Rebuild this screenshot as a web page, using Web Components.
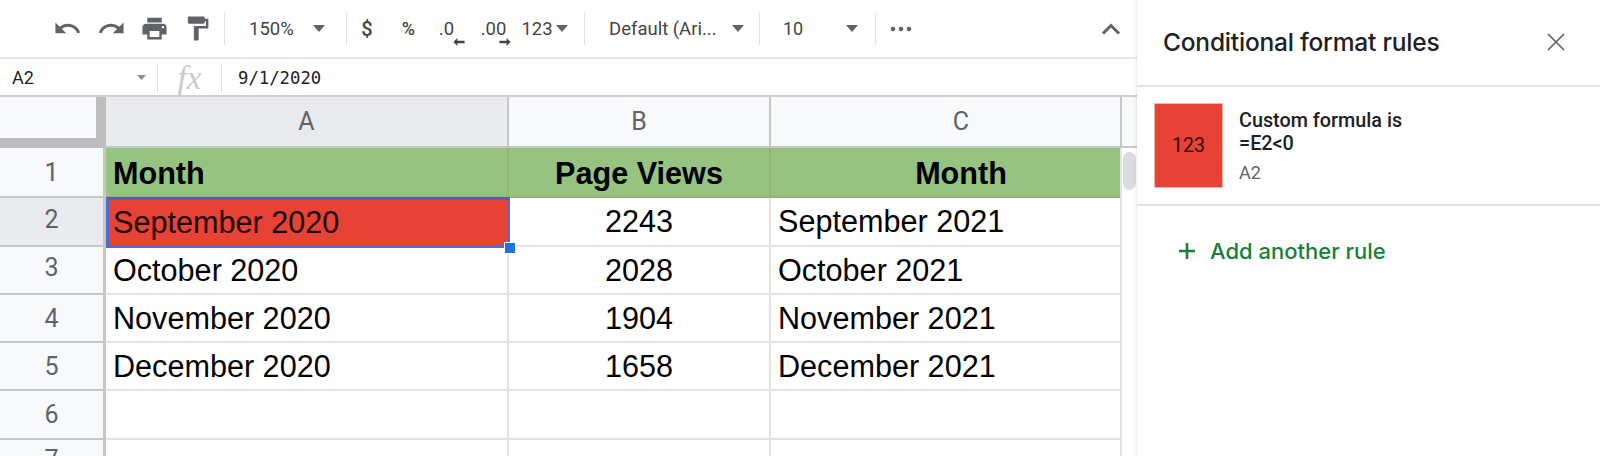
<!DOCTYPE html>
<html>
<head>
<meta charset="utf-8">
<title>Conditional format rules</title>
<style>
html, body { margin: 0; height: 456px; overflow: hidden; background: #fff; }
body { font-family: Roboto, "Liberation Sans", sans-serif; }
#app { display: flex; width: 1600px; height: 456px; overflow: hidden; }
#main { width: 1137px; flex: none; display: flex; flex-direction: column; overflow: hidden; }
</style>
</head>
<body>
<div id="app">
    <div id="main">
        <gs-toolbar></gs-toolbar>
        <gs-formula-bar cell="A2" value="9/1/2020"></gs-formula-bar>
        <gs-sheet>
            <gs-cell kind="corner"></gs-cell>
            <gs-cell kind="col" active>A</gs-cell>
            <gs-cell kind="col">B</gs-cell>
            <gs-cell kind="col">C</gs-cell>

            <gs-cell kind="row">1</gs-cell>
            <gs-cell kind="head" left>Month</gs-cell>
            <gs-cell kind="head">Page Views</gs-cell>
            <gs-cell kind="head">Month</gs-cell>

            <gs-cell kind="row" active style="padding-bottom:5px">2</gs-cell>
            <gs-cell selected left>September 2020</gs-cell>
            <gs-cell>2243</gs-cell>
            <gs-cell left>September 2021</gs-cell>

            <gs-cell kind="row" style="padding-bottom:5px">3</gs-cell>
            <gs-cell left>October 2020</gs-cell>
            <gs-cell>2028</gs-cell>
            <gs-cell left>October 2021</gs-cell>

            <gs-cell kind="row">4</gs-cell>
            <gs-cell left>November 2020</gs-cell>
            <gs-cell>1904</gs-cell>
            <gs-cell left>November 2021</gs-cell>

            <gs-cell kind="row">5</gs-cell>
            <gs-cell left>December 2020</gs-cell>
            <gs-cell>1658</gs-cell>
            <gs-cell left>December 2021</gs-cell>

            <gs-cell kind="row">6</gs-cell>
            <gs-cell></gs-cell>
            <gs-cell></gs-cell>
            <gs-cell></gs-cell>

            <gs-cell kind="row">7</gs-cell>
            <gs-cell></gs-cell>
            <gs-cell></gs-cell>
            <gs-cell></gs-cell>
        </gs-sheet>
    </div>
    <gs-panel title-text="Conditional format rules">
        <gs-rule-card range="A2">
            <span>Custom formula is</span>
            <span>=E2&lt;0</span>
        </gs-rule-card>
    </gs-panel>
</div>

<script>
const ICONS = {
    undo: 'M12.5 8c-2.65 0-5.05.99-6.9 2.6L2 7v9h9l-3.62-3.62c1.39-1.16 3.16-1.88 5.12-1.88 3.54 0 6.55 2.31 7.6 5.5l2.37-.78C21.08 11.03 17.15 8 12.5 8z',
    redo: 'M18.4 10.6C16.55 8.99 14.15 8 11.5 8c-4.65 0-8.58 3.03-9.96 7.22L3.9 16c1.05-3.19 4.05-5.5 7.6-5.5 1.95 0 3.73.72 5.12 1.88L13 16h9V7l-3.6 3.6z',
    print: 'M19 8H5c-1.66 0-3 1.34-3 3v6h4v4h12v-4h4v-6c0-1.66-1.34-3-3-3zm-3 11H8v-5h8v5zm3-7c-.55 0-1-.45-1-1s.45-1 1-1 1 .45 1 1-.45 1-1 1zm-1-9H6v4h12V3z',
    paint: 'M18 4V3c0-.55-.45-1-1-1H5c-.55 0-1 .45-1 1v4c0 .55.45 1 1 1h12c.55 0 1-.45 1-1V6h1v4H9v11c0 .55.45 1 1 1h2c.55 0 1-.45 1-1v-9h8V4h-3z'
};

function icon(name, size) {
    return `<svg width="${size}" height="${size}" viewBox="0 0 24 24" fill="#5f6368"><path d="${ICONS[name]}"/></svg>`;
}

const CARET = '<svg class="caret" width="14" height="7" viewBox="0 0 14 7"><path d="M1 0h12L7 7z" fill="#5f6368"/></svg>';
const ARROW_LEFT = '<svg class="arrow" style="left:28px" width="12" height="8" viewBox="0 0 14 10"><path d="M5 0v3.5h9v3H5V10L0 5z" fill="#444"/></svg>';
const ARROW_RIGHT = '<svg class="arrow" style="left:29px" width="12" height="8" viewBox="0 0 14 10"><path d="M9 0v3.5H0v3h9V10l5-5z" fill="#444"/></svg>';

class GsToolbar extends HTMLElement {
    constructor() {
        super();
        this.attachShadow({ mode: 'open' });
    }

    connectedCallback() {
        this.shadowRoot.innerHTML = `
            <style>
                :host {
                    display: flex;
                    align-items: center;
                    height: 59px;
                    box-sizing: border-box;
                    border-bottom: 2px solid #e6e6e6;
                    color: #444;
                    font: 18.5px Roboto, sans-serif;
                    white-space: nowrap;
                }
                .btn {
                    display: flex;
                    align-items: center;
                    justify-content: center;
                    flex: none;
                    height: 30px;
                    position: relative;
                }
                .sep {
                    flex: none;
                    width: 1px;
                    height: 33px;
                    background: #dfe1e5;
                }
                .arrow { position: absolute; top: 24px; }
                .chev { margin-left: 175px; }
            </style>
            <div class="btn" style="width:46px;margin-left:44px">${icon('undo', 29)}</div>
            <div class="btn" style="width:42px">${icon('redo', 29)}</div>
            <div class="btn" style="width:44px">${icon('print', 29)}</div>
            <div class="btn" style="width:42px">${icon('paint', 29)}</div>
            <div class="btn" style="width:6px"></div>
            <div class="sep"></div>
            <div class="btn" style="width:121px;justify-content:flex-start;padding-left:24px;box-sizing:border-box">150%<span style="margin-left:18px;display:flex">${CARET}</span></div>
            <div class="sep"></div>
            <div class="btn" style="width:40px;font-size:20px;font-weight:500">$</div>
            <div class="btn" style="width:43px;font-size:18px;font-weight:500">%</div>
            <div class="btn" style="width:43px;margin-left:-5px">.0${ARROW_LEFT}</div>
            <div class="btn" style="width:47px;margin-left:2px">.00${ARROW_RIGHT}</div>
            <div class="btn" style="width:46px;margin-left:-3px">123</div>
            <div class="btn" style="width:20px;margin-left:-5px;justify-content:flex-start">${CARET}</div>
            <div class="btn" style="width:9px"></div>
            <div class="sep"></div>
            <div class="btn" style="width:174px;justify-content:flex-start;padding-left:24px;box-sizing:border-box">Default (Ari...<span style="margin-left:14px;display:flex">${CARET}</span></div>
            <div class="sep"></div>
            <div class="btn" style="width:115px;justify-content:flex-start;padding-left:23px;box-sizing:border-box;font-size:18px">10<span style="margin-left:42px;display:flex">${CARET}</span></div>
            <div class="sep"></div>
            <div class="btn" style="width:50px"><svg width="22" height="6" viewBox="0 0 22 6" fill="#5f6368"><circle cx="3" cy="3" r="2.3"/><circle cx="11" cy="3" r="2.3"/><circle cx="19" cy="3" r="2.3"/></svg></div>
            <div class="btn chev"><svg width="20" height="12" viewBox="0 0 20 12"><path d="M2 10.5l8-8 8 8" fill="none" stroke="#5f6368" stroke-width="3"/></svg></div>
        `;
    }
}

class GsFormulaBar extends HTMLElement {
    constructor() {
        super();
        this.attachShadow({ mode: 'open' });
    }

    connectedCallback() {
        this.shadowRoot.innerHTML = `
            <style>
                :host {
                    display: flex;
                    align-items: center;
                    height: 38px;
                    box-sizing: border-box;
                    border-bottom: 2px solid #d0d0d0;
                    padding-top: 1px;
                    font: 18px Roboto, sans-serif;
                    color: #222;
                }
                .name { width: 157px; flex: none; padding-left: 12px; box-sizing: border-box; display: flex; justify-content: space-between; padding-right: 11px; align-items: center; }
                .sep { width: 1px; height: 30px; background: #dfe1e5; flex: none; }
                .fx { width: 63px; flex: none; text-align: center; font: italic 33px/34px "Liberation Serif", serif; color: #c8cacc; }
                .value { padding-left: 16px; font-family: "DejaVu Sans Mono", monospace; font-size: 17.3px; }
            </style>
            <div class="name"><span>${this.getAttribute('cell')}</span><svg width="9" height="5" viewBox="0 0 9 5"><path d="M0 0h9L4.5 5z" fill="#8a8d91"/></svg></div>
            <div class="sep"></div>
            <div class="fx">fx</div>
            <div class="sep"></div>
            <div class="value">${this.getAttribute('value')}</div>
        `;
    }
}

class GsSheet extends HTMLElement {
    constructor() {
        super();
        this.attachShadow({ mode: 'open' });
    }

    connectedCallback() {
        this.shadowRoot.innerHTML = `
            <style>
                :host {
                    display: block;
                    position: relative;
                    flex: 1;
                    overflow: hidden;
                }
                .grid {
                    display: grid;
                    grid-template-columns: 106px 403px 262px 382px;
                    grid-template-rows: 51px 50px 49px 48px 48px 48px 49px 40px;
                }
                /* scrollbar gutter lies over the end of column C */
                .gutter-head {
                    position: absolute;
                    left: 1120px;
                    right: 0;
                    top: 0;
                    height: 51px;
                    box-sizing: border-box;
                    background: #f8f9fa;
                    border-left: 2px solid #c4c7c5;
                    border-bottom: 2px solid #c4c7c5;
                }
                .gutter {
                    position: absolute;
                    left: 1120px;
                    right: 0;
                    top: 51px;
                    bottom: 0;
                    box-sizing: border-box;
                    background: #fff;
                    border-left: 2px solid #e2e3e3;
                }
                .thumb {
                    position: absolute;
                    left: 1123px;
                    top: 55px;
                    width: 13px;
                    height: 38px;
                    border-radius: 7px;
                    background: #dadce0;
                }
            </style>
            <div class="grid"><slot></slot></div>
            <div class="gutter-head"></div>
            <div class="gutter"></div>
            <div class="thumb"></div>
        `;
    }
}

class GsCell extends HTMLElement {
    constructor() {
        super();
        this.attachShadow({ mode: 'open' });
    }

    connectedCallback() {
        this.shadowRoot.innerHTML = `
            <style>
                :host {
                    display: flex;
                    align-items: center;
                    justify-content: center;
                    box-sizing: border-box;
                    position: relative;
                    min-width: 0;
                    overflow: visible;
                    border-bottom: 2px solid #e2e3e3;
                    border-right: 2px solid #e2e3e3;
                    font: 30.6px "Liberation Sans", Arial, sans-serif;
                    color: #000;
                    white-space: nowrap;
                }
                :host([left]) { justify-content: flex-start; padding-left: 7px; }
                :host([kind="head"]) {
                    background: #96c37f;
                    font-weight: 700;
                    padding-top: 3px;
                    border-bottom-color: #8db878;
                    border-right-color: #8db878;
                }
                :host([kind="col"]), :host([kind="row"]) {
                    background: #f8f9fa;
                    font: 25px Roboto, sans-serif;
                    color: #5f6368;
                    border-bottom: 2px solid #c4c7c5;
                    border-right: 2px solid #c4c7c5;
                }
                :host([kind="row"]) { border-right-width: 3px; }
                :host([kind="col"][active]), :host([kind="row"][active]) { background: #e8eaed; }
                :host([kind="corner"]) {
                    background: #f8f9fa;
                    border-right: 10px solid #bdbdbd;
                    border-bottom: 10px solid #bdbdbd;
                }
                :host([selected]) {
                    background: #e64235;
                    color: #1b0503;
                    border: none;
                    z-index: 2;
                }
                .frame {
                    position: absolute;
                    inset: -1px -1px -1px 0;
                    border: 3px solid #4a6fc9;
                    border-top-color: #5a5fa8;
                    pointer-events: none;
                }
                .handle {
                    position: absolute;
                    right: -6px;
                    bottom: -6px;
                    width: 10px;
                    height: 10px;
                    background: #1a73e8;
                    outline: 1px solid #fff;
                }
            </style>
            <slot></slot>
            ${this.hasAttribute('selected') ? '<div class="frame"></div><div class="handle"></div>' : ''}
        `;
    }
}

class GsPanel extends HTMLElement {
    constructor() {
        super();
        this.attachShadow({ mode: 'open' });
    }

    connectedCallback() {
        this.shadowRoot.innerHTML = `
            <style>
                :host {
                    display: flex;
                    flex-direction: column;
                    flex: 1;
                    position: relative;
                    background: #fff;
                    box-shadow: -1px 0 3px rgba(60, 64, 67, 0.12);
                    font-family: Roboto, sans-serif;
                }
                header {
                    display: flex;
                    align-items: center;
                    justify-content: space-between;
                    height: 87px;
                    box-sizing: border-box;
                    border-bottom: 2px solid #e0e2e5;
                    padding: 0 35px 1px 26px;
                    font: 500 24.5px Inter, Roboto, sans-serif;
                    letter-spacing: -0.2px;
                    color: #202124;
                }
                .add {
                    display: flex;
                    align-items: center;
                    gap: 14px;
                    padding: 32px 0 0 41px;
                    font: 500 22px Inter, Roboto, sans-serif;
                    color: #188038;
                }
            </style>
            <header>
                <span>${this.getAttribute('title-text')}</span>
                <svg width="18" height="18" viewBox="0 0 18 18"><path d="M1 1l16 16M17 1L1 17" stroke="#5f6368" stroke-width="1.7" fill="none"/></svg>
            </header>
            <slot></slot>
            <div class="add">
                <svg width="18" height="18" viewBox="0 0 18 18"><path d="M9 1v16M1 9h16" stroke="#188038" stroke-width="2.6" fill="none"/></svg>
                <span>Add another rule</span>
            </div>
        `;
    }
}

class GsRuleCard extends HTMLElement {
    constructor() {
        super();
        this.attachShadow({ mode: 'open' });
    }

    connectedCallback() {
        this.shadowRoot.innerHTML = `
            <style>
                :host {
                    display: flex;
                    height: 119px;
                    box-sizing: border-box;
                    padding: 16px 0 0 17px;
                    gap: 16px;
                    border-bottom: 2px solid #e0e2e5;
                    font-family: Roboto, sans-serif;
                }
                .swatch {
                    display: flex;
                    align-items: center;
                    justify-content: center;
                    width: 69px;
                    height: 85px;
                    background: #e64235;
                    box-sizing: border-box;
                    border: 1px solid #f3b3ad;
                    font-size: 19.5px;
                    color: #3a0a06;
                }
                .text {
                    display: flex;
                    flex-direction: column;
                    padding-top: 6px;
                    font-size: 19.8px;
                    font-weight: 500;
                    line-height: 23px;
                    color: #202124;
                }
                ::slotted(span) { display: block; }
                .range {
                    font-size: 18px;
                    font-weight: 400;
                    color: #5f6368;
                    margin-top: 6px;
                }
            </style>
            <div class="swatch">123</div>
            <div class="text">
                <slot></slot>
                <div class="range">${this.getAttribute('range')}</div>
            </div>
        `;
    }
}

customElements.define('gs-toolbar', GsToolbar);
customElements.define('gs-formula-bar', GsFormulaBar);
customElements.define('gs-sheet', GsSheet);
customElements.define('gs-cell', GsCell);
customElements.define('gs-panel', GsPanel);
customElements.define('gs-rule-card', GsRuleCard);
</script>
</body>
</html>
